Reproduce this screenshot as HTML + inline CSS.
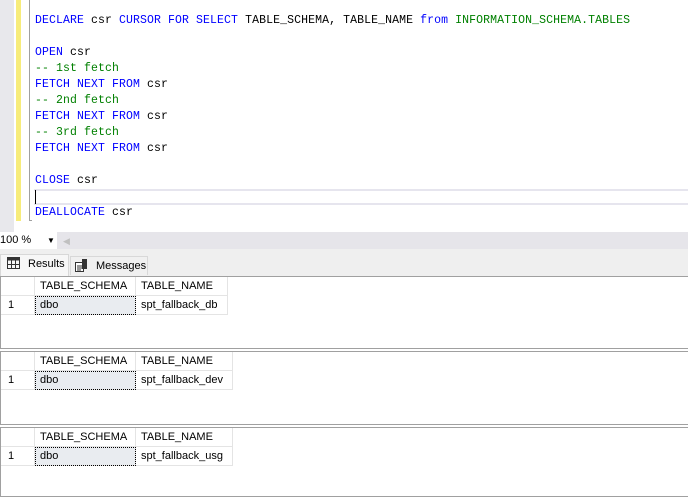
<!DOCTYPE html><html><head><style>
*{margin:0;padding:0;box-sizing:border-box}
body{width:688px;height:490px;overflow:hidden;background:#fff;position:relative;font-family:"Liberation Sans",sans-serif}
.a{position:absolute}
.code{font-family:"Liberation Mono",monospace;font-size:11.5px;letter-spacing:0.1px;line-height:16px;white-space:pre;color:#000}
.k{color:#0000ff}.c{color:#008000}
.g{font-size:11px;color:#000}
.pane{position:absolute;left:0;width:688px;border-top:1px solid #a0a0a0;border-bottom:1px solid #a0a0a0;border-left:1px solid #a0a0a0;background:#fff}
.cell{position:absolute;border-right:1px solid #e4e4e4;border-bottom:1px solid #e4e4e4;padding-left:5px;line-height:18px;font-size:11px;white-space:nowrap}
</style></head><body>
<div class="a" style="left:0;top:0;width:14px;height:232px;background:#e8e8ec"></div>
<div class="a" style="left:16px;top:0;width:5px;height:221px;background:#f7ec7a"></div>
<div class="a" style="left:29px;top:0;width:1px;height:221px;background:#a0a0a0"></div>
<div class="a" style="left:29px;top:220px;width:3px;height:1px;background:#a0a0a0"></div>
<div class="a" style="left:34px;top:189px;width:654px;height:2px;background:#e6e5ee"></div>
<div class="a" style="left:34px;top:203px;width:654px;height:2px;background:#e6e5ee"></div>
<div class="a" style="left:35px;top:190px;width:1px;height:14px;background:#000"></div>
<div class="a code" style="left:35px;top:13px"><span class="k">DECLARE</span> csr <span class="k">CURSOR FOR SELECT</span> TABLE_SCHEMA, TABLE_NAME <span class="k">from</span> <span class="c">INFORMATION_SCHEMA.TABLES</span>

<span class="k">OPEN</span> csr
<span class="c">-- 1st fetch</span>
<span class="k">FETCH NEXT FROM</span> csr
<span class="c">-- 2nd fetch</span>
<span class="k">FETCH NEXT FROM</span> csr
<span class="c">-- 3rd fetch</span>
<span class="k">FETCH NEXT FROM</span> csr

<span class="k">CLOSE</span> csr

<span class="k">DEALLOCATE</span> csr</div>
<div class="a" style="left:0;top:232px;width:688px;height:17px;background:#e6e5ea"></div>
<div class="a g" style="left:0;top:232px;width:57px;height:17px;background:#fff;line-height:17px;font-size:11px">100 %<span style="position:absolute;left:47px;top:0;font-size:8px">▼</span></div>
<div class="a" style="left:63px;top:236px;font-size:9px;color:#c0c0c0">◀</div>
<div class="a" style="left:0;top:249px;width:688px;height:27px;background:#efefef"></div>
<div class="a g" style="left:0;top:254px;width:69px;height:22px;background:#f7f7f7;border:1px solid #d8d8d8;border-bottom:none;padding:3px 0 0 27px">Results</div>
<svg class="a" style="left:7px;top:257px" width="13" height="12"><rect x="0.5" y="0.5" width="12" height="11" fill="none" stroke="#333"/><rect x="0.5" y="0.5" width="12" height="3" fill="#333"/><path d="M4.5 1V12M8.5 1V12M1 7.5H12" stroke="#333"/></svg>
<div class="a g" style="left:70px;top:256px;width:78px;height:19px;background:#f0f0f0;border:1px solid #d8d8d8;border-bottom:none;padding:3px 0 0 25px">Messages</div>
<svg class="a" style="left:75px;top:259px" width="13" height="13"><rect x="0.5" y="3.5" width="8" height="9" fill="#fff" stroke="#333"/><path d="M2 7H7M2 9H7M2 11H6" stroke="#333"/><rect x="7" y="0" width="5" height="10" fill="#333"/></svg>
<div class="pane" style="top:276px;height:73px"></div>
<div class="pane" style="top:351px;height:74px"></div>
<div class="pane" style="top:427px;height:70px"></div>
<div class="cell" style="left:1px;top:277px;width:34px;height:19px"></div>
<div class="cell" style="left:35px;top:277px;width:101px;height:19px">TABLE_SCHEMA</div>
<div class="cell" style="left:136px;top:277px;width:92px;height:19px">TABLE_NAME</div>
<div class="cell" style="left:1px;top:296px;width:34px;height:19px;padding-left:7px">1</div>
<div class="cell" style="left:35px;top:296px;width:101px;height:19px;background:#e9ecf0;outline:1px dotted #000;outline-offset:-1px">dbo</div>
<div class="cell" style="left:136px;top:296px;width:92px;height:19px">spt_fallback_db</div>
<div class="cell" style="left:1px;top:352px;width:34px;height:19px"></div>
<div class="cell" style="left:35px;top:352px;width:101px;height:19px">TABLE_SCHEMA</div>
<div class="cell" style="left:136px;top:352px;width:97px;height:19px">TABLE_NAME</div>
<div class="cell" style="left:1px;top:371px;width:34px;height:19px;padding-left:7px">1</div>
<div class="cell" style="left:35px;top:371px;width:101px;height:19px;background:#e9ecf0;outline:1px dotted #000;outline-offset:-1px">dbo</div>
<div class="cell" style="left:136px;top:371px;width:97px;height:19px">spt_fallback_dev</div>
<div class="cell" style="left:1px;top:428px;width:34px;height:19px"></div>
<div class="cell" style="left:35px;top:428px;width:101px;height:19px">TABLE_SCHEMA</div>
<div class="cell" style="left:136px;top:428px;width:97px;height:19px">TABLE_NAME</div>
<div class="cell" style="left:1px;top:447px;width:34px;height:19px;padding-left:7px">1</div>
<div class="cell" style="left:35px;top:447px;width:101px;height:19px;background:#e9ecf0;outline:1px dotted #000;outline-offset:-1px">dbo</div>
<div class="cell" style="left:136px;top:447px;width:97px;height:19px">spt_fallback_usg</div>
</body></html>
